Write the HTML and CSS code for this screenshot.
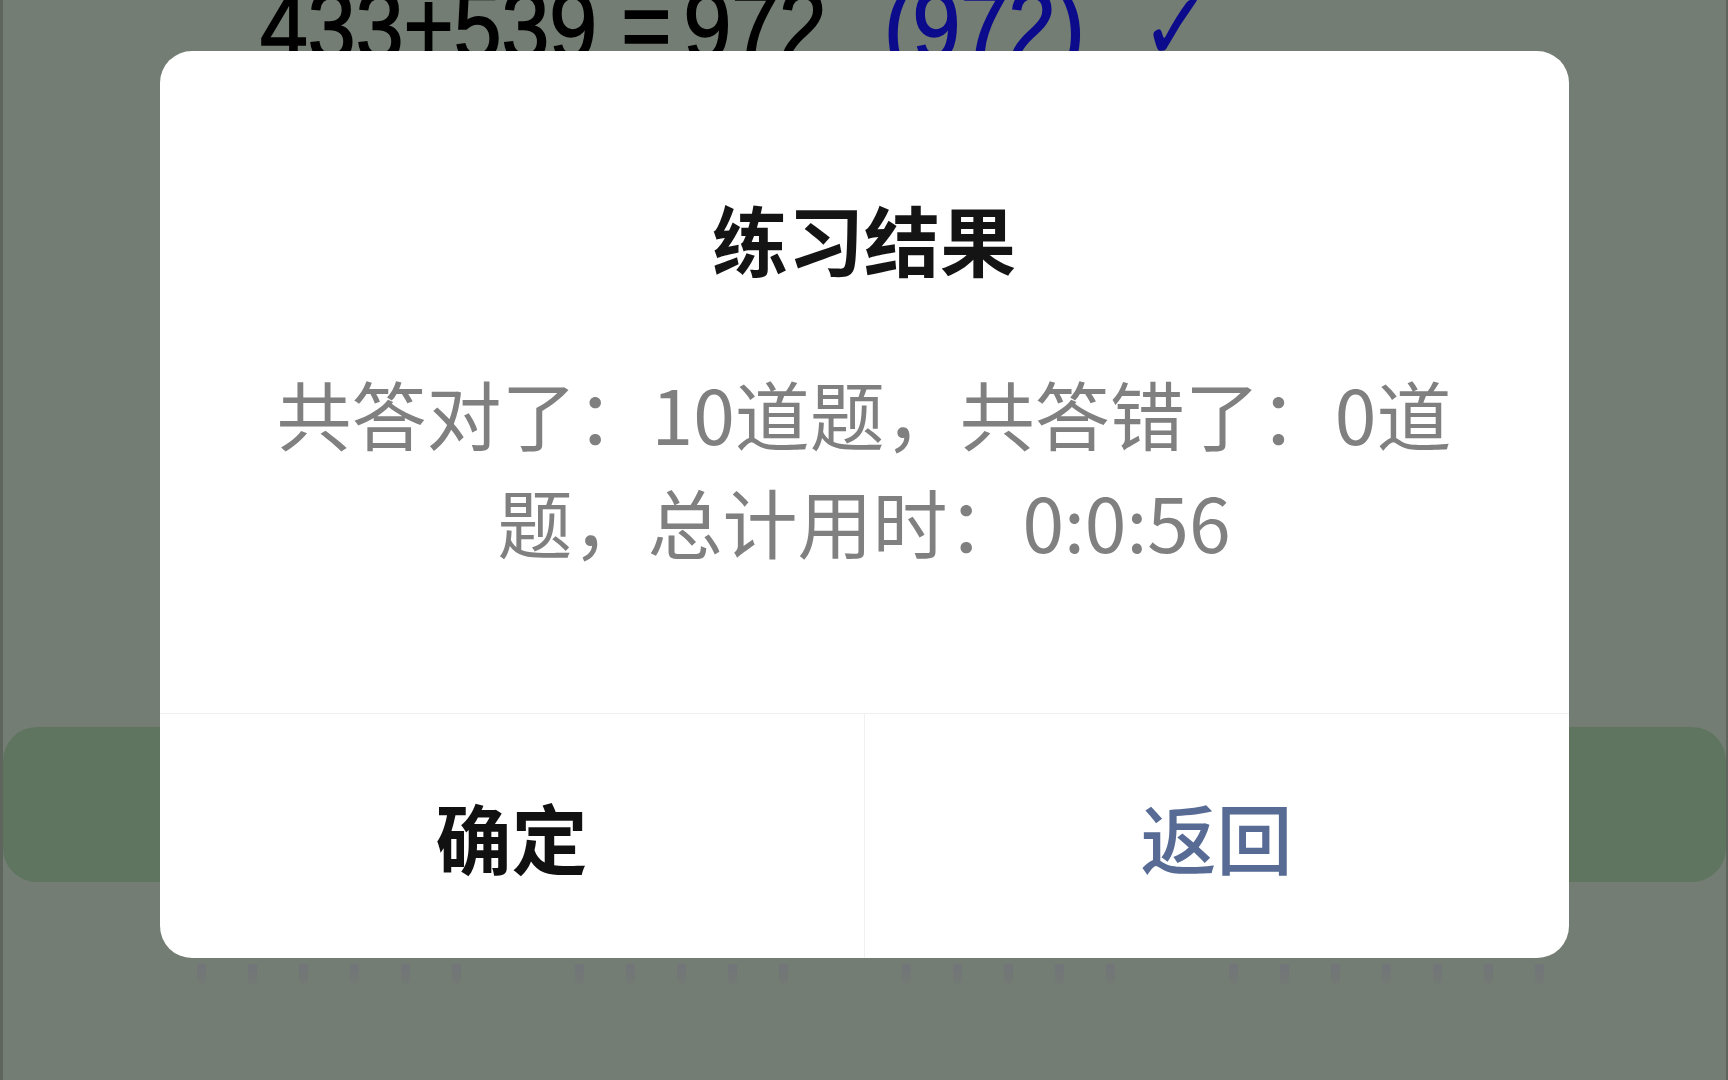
FILE: index.html
```html
<!DOCTYPE html>
<html lang="zh-CN">
<head>
<meta charset="utf-8">
<title>练习结果</title>
<link rel="stylesheet" href="styles.css">
</head>
<body>
<div class="page">
  <div class="question-row">
    <span class="expr">433+539</span>
    <span class="eq">=</span>
    <span class="ans">972</span>
    <span class="user-ans">(972)</span>
    <span class="check">✓</span>
  </div>
  <div class="band"></div>
  <div class="peek-row">
    <span></span><span></span><span></span><span></span><span></span><span></span>
    <span class="gap"></span><span></span><span></span><span></span><span></span><span></span>
    <span class="gap"></span><span></span><span></span><span></span><span></span><span></span>
    <span class="gap"></span><span></span><span></span><span></span><span></span><span></span>
    <span></span><span></span>
  </div>
</div>

<div class="mask">
  <div class="modal">
    <div class="modal-hd">练习结果</div>
    <div class="modal-bd">共答对了：10道题，共答错了：0道题，总计用时：0:0:56</div>
    <div class="modal-ft">
      <div class="btn btn-default">确定</div>
      <div class="btn btn-primary">返回</div>
    </div>
  </div>
</div>
</body>
</html>
```

FILE: styles.css
```css
html, body {
  margin: 0;
  padding: 0;
}

body {
  width: 1728px;
  height: 1080px;
  overflow: hidden;
  background: #d1e3d1;
  font-family: "Noto Sans CJK SC", "Noto Sans", sans-serif;
  position: relative;
  box-sizing: border-box;
  border-left: 3px solid #a9b8a9;
  border-right: 2px solid #a9b8a9;
}

.page {
  display: flex;
  flex-direction: column;
}

.question-row {
  display: flex;
  align-items: baseline;
  margin-top: -13px;
  padding-left: 257px;
  height: 86px;
  font-family: "Liberation Sans", Arial, sans-serif;
  font-size: 86px;
  line-height: 86px;
  color: #000;
  white-space: nowrap;
  -webkit-text-stroke: 1.5px currentColor;
  transform: scaleY(1.15);
  transform-origin: 0 73px;
}

.eq {
  margin-left: 24px;
}

.ans {
  margin-left: 12px;
}

.user-ans {
  margin-left: 57px;
  color: #1414ff;
}

.check {
  margin-left: 56px;
  color: #1414ff;
  font-family: "DejaVu Sans", sans-serif;
  font-size: 84px;
  -webkit-text-stroke: 0;
}

.band {
  margin: 654px 0 0 0;
  height: 155px;
  border-radius: 34px;
  background: #add5af;
}

.peek-row {
  display: flex;
  gap: 42px;
  margin-top: 82px;
  padding-left: 194px;
  height: 24px;
}

.peek-row span {
  width: 9px;
  height: 20px;
  border-radius: 2px 2px 5px 5px;
  background: linear-gradient(#d0d6de, #d1ddd4);
}

.peek-row span.gap {
  width: 30px;
  background: transparent;
}

.mask {
  position: fixed;
  inset: 0;
  background: rgba(0, 0, 0, 0.45);
  display: flex;
  justify-content: center;
  align-items: flex-start;
  padding-top: 51px;
}

.modal {
  width: 1409px;
  background: #ffffff;
  border-radius: 32px;
  overflow: hidden;
  text-align: center;
}

.modal-hd {
  padding: 134px 106px 0;
  font-size: 76px;
  line-height: 106px;
  font-weight: 700;
  color: #141414;
}

.modal-bd {
  padding: 68px 106px 0;
  font-size: 75px;
  line-height: 108px;
  color: #808080;
  word-break: break-all;
}

.modal-ft {
  margin-top: 138px;
  border-top: 1px solid #efefef;
  display: flex;
  height: 244px;
}

.btn {
  flex: 1;
  display: flex;
  align-items: center;
  justify-content: center;
  font-size: 76px;
}

.btn-default {
  color: #111111;
  font-weight: 600;
  border-right: 1px solid #f1f1f1;
}

.btn-primary {
  color: #576b95;
  font-weight: 500;
}
```
